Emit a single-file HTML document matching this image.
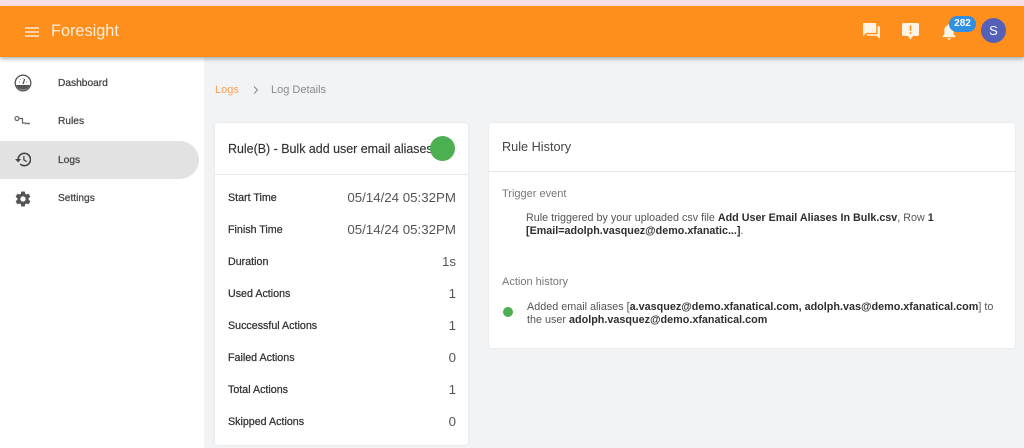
<!DOCTYPE html>
<html>
<head>
<meta charset="utf-8">
<style>
html,body{margin:0;padding:0;width:1024px;height:448px;overflow:hidden;background:#f1f3f5;font-family:"Liberation Sans",sans-serif;}
.a{position:absolute;white-space:nowrap;}
#strip{left:0;top:0;width:1024px;height:6px;background:#fddfe6;}
#hdr{left:0;top:6px;width:1024px;height:51px;background:#ff8f1c;box-shadow:0 2px 4px rgba(0,0,0,.3);z-index:3;}
#side{left:0;top:57px;width:204px;height:391px;background:#fff;}
#sel{left:0;top:141px;width:199px;height:38px;background:#e2e2e2;border-radius:0 19px 19px 0;}
.nav{left:58px;font-size:10.2px;color:#444;line-height:14px;-webkit-text-stroke:.25px #444;}
.card{background:#fff;border-radius:3px;box-shadow:0 0 2px rgba(0,0,0,.08);}
.lb{left:228px;font-size:10.7px;color:#333;line-height:14px;-webkit-text-stroke:.25px #333;}
.val{right:568px;font-size:13.3px;color:#555;line-height:16px;}
.hr{height:1px;background:#e8e8e8;}
.t{font-size:10.8px;color:#555;line-height:13px;}
.t b{color:#2e2e2e;}
.g{font-size:11px;color:#777;line-height:13px;}
</style>
</head>
<body>
<div class="a" id="strip"></div>
<div class="a" id="hdr"></div>

<svg class="a" style="left:25px;top:27px;z-index:4" width="14" height="10" viewBox="0 0 14 10"><path d="M0 1h14M0 5h14M0 9h14" stroke="#ffe9cc" stroke-width="1.500" fill="none"/></svg>
<div class="a" style="left:51px;top:21px;font-size:16.300px;line-height:20px;color:#ffeeda;z-index:4">Foresight</div>

<svg class="a" style="left:863px;top:23px;z-index:4" width="17" height="16" viewBox="0 0 18 17"><path d="M0 0h14v10.500H3.500L0 14zM15.500 3.500H18V17l-3.500-3.500H4V12h11.500z" fill="#fff3e3"/></svg>
<svg class="a" style="left:902px;top:23px;z-index:4" width="17" height="17" viewBox="0 0 17 17"><path d="M1.500 0h14A1.500 1.500 0 0 1 17 1.500v10a1.500 1.500 0 0 1-1.500 1.500H11l-2.500 3.500L6 13H1.500A1.500 1.500 0 0 1 0 11.500v-10A1.500 1.500 0 0 1 1.500 0z" fill="#fff3e3"/><path d="M7.700 2.500h1.600v5.500H7.700zM7.700 9.300h1.600V11H7.700z" fill="#ff8f1c"/></svg>
<svg class="a" style="left:942px;top:24px;z-index:4" width="14" height="16" viewBox="0 0 15 17"><path d="M7.500 0c.8 0 1.200.6 1.200 1.300C11 2 12.500 4 12.500 6.500V11l2 2v1H.5v-1l2-2V6.500C2.500 4 4 2 6.300 1.300 6.300.6 6.700 0 7.500 0zM5.800 15h3.400a1.700 1.700 0 0 1-3.400 0z" fill="#fff3e3"/></svg>
<div class="a" style="left:949px;top:16px;width:27px;height:16px;background:#2f8fe0;border-radius:8px;color:#fff;font-size:10px;font-weight:bold;line-height:16px;text-align:center;z-index:5">282</div>
<div class="a" style="left:981px;top:18px;width:25px;height:25px;background:#5560b8;border-radius:50%;color:#fff;font-size:13px;line-height:25px;text-align:center;z-index:5">S</div>

<div class="a" id="side"></div>
<div class="a" id="sel"></div>

<svg class="a" style="left:14px;top:74px" width="18" height="18" viewBox="0 0 18 18"><circle cx="9" cy="9" r="7.800" fill="none" stroke="#555" stroke-width="1.300"/><path d="M2 11h14a7.500 7.500 0 0 1-14 0z" fill="#555"/><path d="M9 10l1.700-5" stroke="#555" stroke-width="1.300"/><path d="M5 8h1M12 8h1M9 4v1M6 5l.6.7" stroke="#777" stroke-width="1"/></svg>
<div class="a nav" style="top:77px">Dashboard</div>

<svg class="a" style="left:14px;top:115px" width="17" height="13" viewBox="0 0 17 13"><circle cx="3" cy="3.500" r="2" fill="none" stroke="#666" stroke-width="1.200"/><path d="M5 3.500h3.500v4.500h3" fill="none" stroke="#666" stroke-width="1.200"/><path d="M11 8.500h5" stroke="#777" stroke-width="1.600"/></svg>
<div class="a nav" style="top:115px">Rules</div>

<svg class="a" style="left:15px;top:152px" width="16" height="15" viewBox="0 0 18 17"><path d="M3.500 8.500a7 7 0 1 1 2.300 5.200" fill="none" stroke="#444" stroke-width="1.800"/><path d="M0 8h7l-3.500 3.800z" fill="#444"/><path d="M10 4.500v4.500l3.200 1.900" fill="none" stroke="#444" stroke-width="1.400"/></svg>
<div class="a nav" style="top:154px">Logs</div>

<svg class="a" style="left:14px;top:190px" width="18" height="18" viewBox="0 0 24 24"><path fill="#555" d="M19.430 12.980c.04-.32.07-.64.070-.98s-.03-.66-.07-.98l2.110-1.650c.19-.15.24-.42.120-.64l-2-3.460c-.12-.22-.39-.3-.61-.22l-2.490 1c-.52-.4-1.080-.73-1.690-.98l-.38-2.650C14.460 2.180 14.250 2 14 2h-4c-.25 0-.46.180-.49.420l-.38 2.650c-.61.25-1.170.59-1.690.98l-2.490-1c-.23-.09-.49 0-.61.220l-2 3.460c-.13.220-.07.490.12.640l2.110 1.650c-.04.320-.07.650-.07.980s.03.660.07.980l-2.110 1.650c-.19.150-.24.420-.12.640l2 3.460c.12.220.39.300.61.220l2.490-1c.52.400 1.080.730 1.690.980l.38 2.650c.03.240.24.420.49.420h4c.25 0 .46-.18.49-.42l.38-2.650c.61-.25 1.170-.59 1.690-.98l2.490 1c.23.090.49 0 .61-.22l2-3.460c.12-.22.070-.49-.12-.64l-2.110-1.650zM12 15.500c-1.930 0-3.500-1.570-3.500-3.500s1.570-3.500 3.500-3.500 3.500 1.570 3.500 3.500-1.570 3.500-3.500 3.500z"/></svg>
<div class="a nav" style="top:192px">Settings</div>

<div class="a" style="left:215px;top:83px;font-size:11px;line-height:14px;color:#f5a25a">Logs</div>
<svg class="a" style="left:253px;top:86px" width="6" height="8" viewBox="0 0 6 8"><path d="M1 .5L4.500 4 1 7.500" fill="none" stroke="#888" stroke-width="1"/></svg>
<div class="a" style="left:271px;top:83px;font-size:11px;line-height:14px;color:#8a8a8a">Log Details</div>

<div class="a card" style="left:215px;top:123px;width:253px;height:322px"></div>
<div class="a" style="left:228px;top:142px;font-size:12.450px;line-height:15px;color:#333;-webkit-text-stroke:.15px #333;width:204px;overflow:hidden">Rule(B) - Bulk add user email aliases</div>
<div class="a" style="left:430px;top:136px;width:25px;height:25px;border-radius:50%;background:#4caf50"></div>
<div class="a hr" style="left:215px;top:174px;width:253px"></div>

<div class="a lb" style="top:191px">Start Time</div>
<div class="a val" style="top:190px">05/14/24 05:32PM</div>
<div class="a lb" style="top:223px">Finish Time</div>
<div class="a val" style="top:222px">05/14/24 05:32PM</div>
<div class="a lb" style="top:255px">Duration</div>
<div class="a val" style="top:254px">1s</div>
<div class="a lb" style="top:287px">Used Actions</div>
<div class="a val" style="top:286px">1</div>
<div class="a lb" style="top:319px">Successful Actions</div>
<div class="a val" style="top:318px">1</div>
<div class="a lb" style="top:351px">Failed Actions</div>
<div class="a val" style="top:350px">0</div>
<div class="a lb" style="top:383px">Total Actions</div>
<div class="a val" style="top:382px">1</div>
<div class="a lb" style="top:415px">Skipped Actions</div>
<div class="a val" style="top:414px">0</div>

<div class="a card" style="left:489px;top:123px;width:526px;height:225px"></div>
<div class="a" style="left:502px;top:140px;font-size:12.700px;line-height:15px;color:#444">Rule History</div>
<div class="a hr" style="left:489px;top:171px;width:526px"></div>
<div class="a g" style="left:502px;top:188px">Trigger event</div>
<div class="a t" style="left:526px;top:212px;font-size:10.750px">Rule triggered by your uploaded csv file <b>Add User Email Aliases In Bulk.csv</b>, Row <b>1</b></div>
<div class="a t" style="left:526px;top:225px;font-size:10.750px"><b>[Email=adolph.vasquez@demo.xfanatic...]</b>.</div>
<div class="a g" style="left:502px;top:276px">Action history</div>
<div class="a" style="left:503px;top:307px;width:10px;height:10px;border-radius:50%;background:#4caf50"></div>
<div class="a t" style="left:527px;top:301px">Added email aliases [<b>a.vasquez@demo.xfanatical.com, adolph.vas@demo.xfanatical.com</b>] to</div>
<div class="a t" style="left:527px;top:314px">the user <b>adolph.vasquez@demo.xfanatical.com</b></div>
</body>
</html>
